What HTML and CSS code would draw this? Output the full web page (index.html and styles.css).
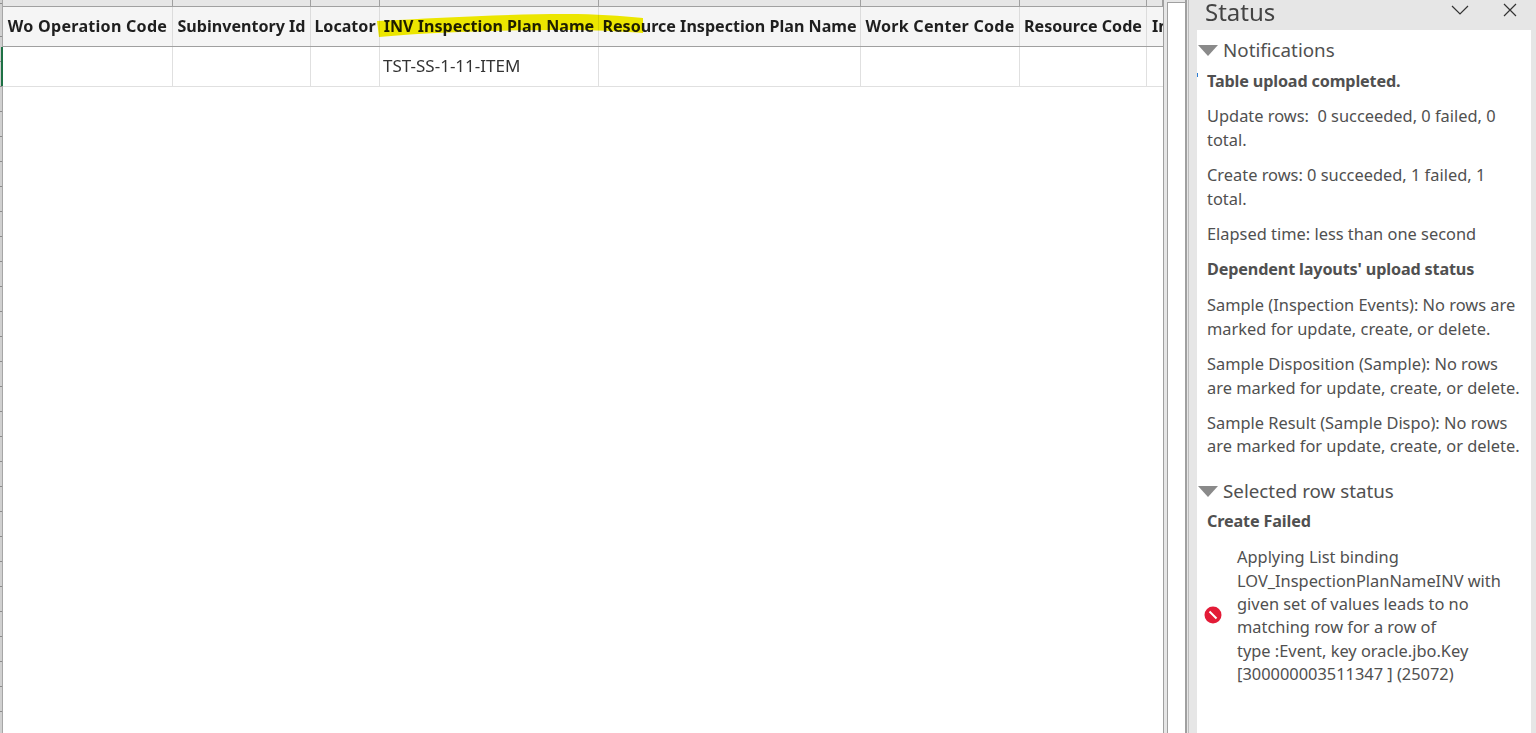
FILE: index.html
```html
<!doctype html>
<html lang="en">

<head>
  <meta charset="UTF-8" />
  <title>Status</title>
  <link rel="stylesheet" href="styles.css">
</head>

<body>
  <div class="sheet">
    <div class="row-strip"><div class="active-row"></div></div>
    <div class="grid">
      <div class="col-strip">
        <span class="c1"></span><span class="c2"></span><span class="c3"></span><span class="c4"></span><span class="c5"></span><span class="c6"></span><span class="c7"></span><span class="c8"></span>
      </div>
      <div class="head-row">
        <div class="c1 wide">Wo Operation Code</div>
        <div class="c2">Subinventory Id</div>
        <div class="c3">Locator</div>
        <div class="c4">INV Inspection Plan Name</div>
        <div class="c5">Resource Inspection Plan Name</div>
        <div class="c6 wide">Work Center Code</div>
        <div class="c7">Resource Code</div>
        <div class="c8">Inspection</div>
      </div>
      <div class="data-row">
        <div class="c1"></div>
        <div class="c2"></div>
        <div class="c3"></div>
        <div class="c4">TST-SS-1-11-ITEM</div>
        <div class="c5"></div>
        <div class="c6"></div>
        <div class="c7"></div>
        <div class="c8"></div>
      </div>
    </div>
    <svg class="marker" width="270" height="26" viewBox="0 0 270 26">
      <path d="M1 8 C60 5 130 1 190 1 C220 1 245 3 267 5 L267 20 C240 18 220 17 190 17 C130 17 60 19 3 24 Z" fill="#f6f000" />
    </svg>
    <div class="gutter"></div>
  </div>

  <aside class="pane">
    <div class="pane-title">
      <span class="title-text">Status</span>
      <svg class="title-icon" width="18" height="10" viewBox="0 0 18 10"><path d="M1 1 L9 9 L17 1" fill="none" stroke="#333" stroke-width="1.2" /></svg>
      <svg class="title-icon close" width="14" height="14" viewBox="0 0 14 14"><path d="M1 1 L13 13 M13 1 L1 13" fill="none" stroke="#333" stroke-width="1.2" /></svg>
    </div>
    <div class="pane-body">
      <h2 class="section"><span class="tri"></span>Notifications</h2>
      <p class="msg strong first">Table upload completed.</p>
      <p class="msg after-strong">Update rows:&nbsp; 0 succeeded, 0 failed, 0<br>total.</p>
      <p class="msg">Create rows: 0 succeeded, 1 failed, 1<br>total.</p>
      <p class="msg">Elapsed time: less than one second</p>
      <p class="msg strong">Dependent layouts' upload status</p>
      <p class="msg">Sample (Inspection Events): No rows are<br>marked for update, create, or delete.</p>
      <p class="msg">Sample Disposition (Sample): No rows<br>are marked for update, create, or delete.</p>
      <p class="msg">Sample Result (Sample Dispo): No rows<br>are marked for update, create, or delete.</p>
      <h2 class="section second"><span class="tri"></span>Selected row status</h2>
      <p class="msg strong first failed">Create Failed</p>
      <div class="error">
        <svg class="error-icon" width="18" height="18" viewBox="0 0 18 18">
          <circle cx="9" cy="9" r="8.5" fill="#e31b37" />
          <path d="M5.5 5.5 L12.5 12.5" stroke="#fff" stroke-width="2" />
        </svg>
        <p class="error-text">Applying List binding<br>LOV_InspectionPlanNameINV with<br>given set of values leads to no<br>matching row for a row of<br>type :Event, key oracle.jbo.Key<br>[300000003511347 ] (25072)</p>
      </div>
    </div>
  </aside>
</body>

</html>
```

FILE: styles.css
```css
html,
body {
  margin: 0;
  height: 733px;
  overflow: hidden;
}

body {
  display: flex;
  background: #fff;
  font-family: "Noto Sans", "Open Sans", sans-serif;
  color: #262626;
}

.sheet {
  position: relative;
  display: flex;
  width: 1185px;
  flex: none;
  background: #e6e6e6;
}

.row-strip {
  width: 2px;
  flex: none;
  background: repeating-linear-gradient(to bottom, #d0d0d0 0, #d0d0d0 24px, #8c8c8c 24px, #8c8c8c 25px) 0 12px;
  border-right: 1px solid #a6a6a6;
}

.active-row {
  width: 2px;
  height: 39px;
  margin: 47px 0 0 1px;
  background: #1e7145;
}

.grid {
  width: 1160px;
  flex: none;
  overflow: hidden;
  background: #fff;
  border-right: 1px solid #a0a0a0;
}

.col-strip,
.head-row,
.data-row {
  display: grid;
  grid-template-columns: 170px 138px 69px 219px 262px 159px 127px 16px;
}

.col-strip {
  height: 6px;
  background: #e6e6e6;
  border-bottom: 1px solid #a0a0a0;
}

.col-strip span {
  border-right: 1px solid #a0a0a0;
}

.head-row {
  height: 39px;
  background: #f5f5f5;
  border-bottom: 1px solid #a0a0a0;
}

.head-row div {
  display: flex;
  align-items: center;
  justify-content: center;
  padding-bottom: 2px;
  overflow: hidden;
  white-space: nowrap;
  font-size: 16.1px;
  font-weight: 700;
  color: #1f1f1f;
  border-right: 1px solid #dcdcdc;
}

.head-row .wide {
  letter-spacing: 0.25px;
}

.head-row .c8 {
  justify-content: flex-start;
  padding-left: 5px;
  border-right: 0;
}

.data-row {
  height: 39px;
  border-bottom: 1px solid #e0e0e0;
}

.data-row div {
  display: flex;
  align-items: center;
  padding-left: 3px;
  padding-bottom: 3px;
  font-size: 17px;
  color: #333;
  border-right: 1px solid #e0e0e0;
}

.data-row .c8 {
  border-right: 0;
}

.marker {
  position: absolute;
  left: 376px;
  top: 13px;
  mix-blend-mode: multiply;
}

.gutter {
  width: 17px;
  flex: none;
  margin: 2px 0 0 3px;
  border-left: 1px solid #a0a0a0;
  border-top: 1px solid #a0a0a0;
  background: #fff;
}

.pane {
  flex: 1;
  display: flex;
  flex-direction: column;
  padding: 0 5px 0 10px;
  background: #e6e6e6;
  border-left: 2px solid #a0a0a0;
  box-shadow: inset 1px 0 0 #e6e6e6, inset 2px 0 0 #bdbdbd;
  box-sizing: border-box;
  color: #505050;
}

.pane-title {
  height: 30px;
  display: flex;
  align-items: center;
  flex: none;
  color: #444;
}

.title-text {
  flex: 1;
  padding-left: 8px;
  margin-top: -8px;
  font-size: 24px;
}

.title-icon {
  margin-right: 34px;
  margin-top: -10px;
}

.title-icon.close {
  margin-right: 14px;
}

.pane-body {
  position: relative;
  flex: 1;
  background: #fff;
  padding: 0 0 0 10px;
}

.pane-body::before {
  content: "";
  position: absolute;
  left: 0;
  top: 43px;
  width: 1px;
  height: 4px;
  background: #2b7cd3;
}

.section {
  display: flex;
  align-items: center;
  margin: 9px 0 0 -9px;
  font-size: 18.8px;
  font-weight: 400;
  line-height: 23px;
  color: #505050;
}

.section.second {
  margin-top: 22px;
}

.tri {
  width: 0;
  height: 0;
  margin-right: 5px;
  border-left: 10px solid transparent;
  border-right: 10px solid transparent;
  border-top: 11px solid #8a8a8a;
}

.msg {
  margin: 12.1px 0 0;
  font-size: 16.4px;
  line-height: 23.4px;
  white-space: nowrap;
}

.msg.first {
  margin-top: 8px;
}

.msg.failed {
  margin-top: 7px;
}

.msg.after-strong {
  margin-top: 11px;
}

.msg.strong {
  font-size: 16.2px;
  font-weight: 700;
  letter-spacing: -0.15px;
}

.error {
  display: flex;
  align-items: center;
  margin-top: 12px;
}

.error-icon {
  flex: none;
  margin-left: -3px;
  margin-right: 15px;
}

.error-text {
  margin: 0;
  font-size: 16.4px;
  line-height: 23.4px;
  white-space: nowrap;
}
```
